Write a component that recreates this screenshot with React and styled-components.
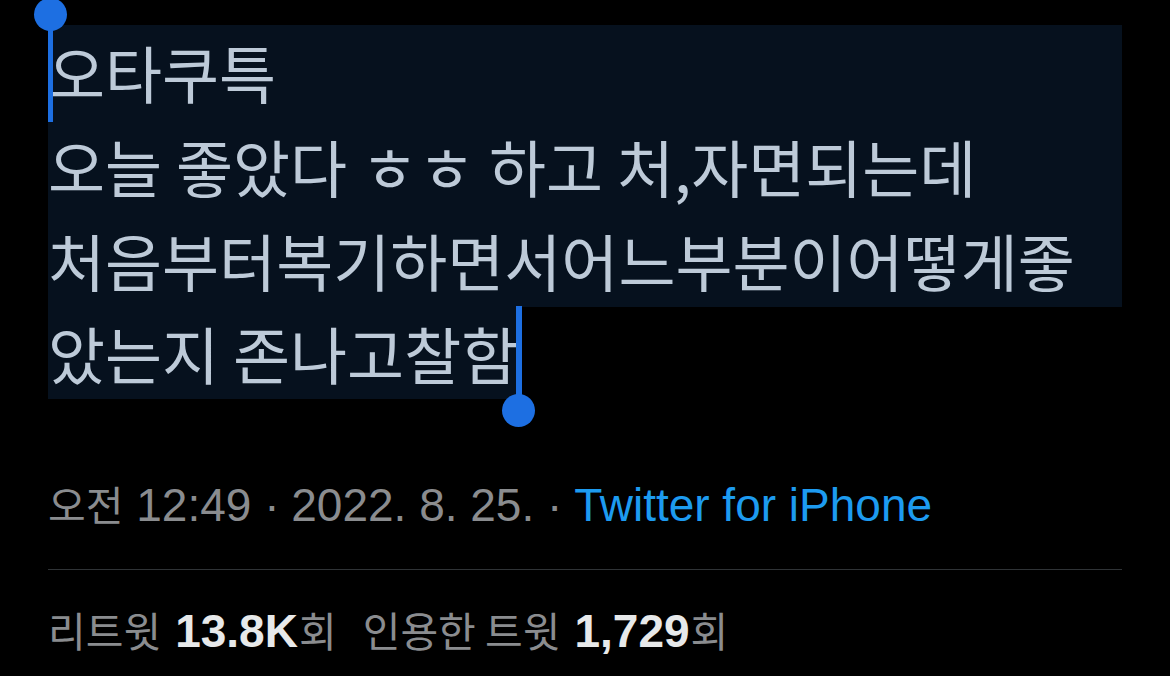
import React from "react";
import styled, { createGlobalStyle } from "styled-components";

const Global = createGlobalStyle`
  html, body {
    margin: 0;
    padding: 0;
    background: #000;
  }
  body {
    font-family: "Noto Sans CJK KR", "Liberation Sans", sans-serif;
    -webkit-font-smoothing: antialiased;
  }
`;

const Page = styled.div`
  width: 1170px;
  height: 676px;
  overflow: hidden;
  background: #000;
  box-sizing: border-box;
  padding: 25px 48px 0 48px;
`;

const Selection = styled.div`
  position: relative;
  font-family: "Noto Sans CJK KR", sans-serif;
  font-size: 62px;
  color: #bdcad8;
`;

const FullLines = styled.div`
  position: relative;
  background: #06111e;
  white-space: pre;
  line-height: 94px;
`;

const LastLine = styled.span`
  position: relative;
  display: inline-block;
  vertical-align: top;
  background: #06111e;
  white-space: pre;
  line-height: 92px;
  padding-right: 0;
`;

const handleBlue = "#1d6fe2";

const StartHandle = styled.span`
  position: absolute;
  left: 0;
  top: -25px;
  width: 5px;
  height: 122px;
  background: ${handleBlue};
  &::before {
    content: "";
    position: absolute;
    left: -14px;
    top: -2px;
    width: 33px;
    height: 33px;
    border-radius: 50%;
    background: ${handleBlue};
  }
`;

const EndHandle = styled.span`
  position: absolute;
  left: calc(100% - 2px);
  top: -1px;
  width: 6px;
  height: 100px;
  background: ${handleBlue};
  &::after {
    content: "";
    position: absolute;
    left: -14px;
    bottom: -21px;
    width: 33px;
    height: 33px;
    border-radius: 50%;
    background: ${handleBlue};
  }
`;

const Meta = styled.div`
  margin-top: 76px;
  font-family: "Liberation Sans", "Noto Sans CJK KR", sans-serif;
  font-size: 46px;
  line-height: 60px;
  height: 60px;
  color: #8a8c8f;
  white-space: pre;
`;

const Ko = styled.span`
  font-family: "Noto Sans CJK KR", sans-serif;
  font-size: 41px;
  line-height: 1;
`;

const Dot = styled.span`
  margin: 0 -1px 0 0;
`;

const Source = styled.span`
  color: #1d9bf0;
`;

const Divider = styled.div`
  margin-top: 34px;
  height: 1px;
  background: #2f3336;
`;

const Stats = styled.div`
  margin-top: 31px;
  font-family: "Liberation Sans", "Noto Sans CJK KR", sans-serif;
  font-size: 46px;
  line-height: 60px;
  color: #8a8c8f;
  white-space: pre;
  display: flex;
  gap: 26px;
`;

const Stat = styled.span``;

const Num = styled.b`
  color: #e7e9ea;
  font-weight: 700;
  margin: 0 1px 0 14px;
`;

export default function App() {
  return (
    <>
      <Global />
      <Page>
        <Selection>
          <FullLines>
            <StartHandle />
            {"오타쿠특\n오늘 좋았다 ㅎㅎ 하고 처,자면되는데\n처음부터복기하면서어느부분이어떻게좋"}
          </FullLines>
          <LastLine>
            {"았는지 존나고찰함"}
            <EndHandle />
          </LastLine>
        </Selection>
        <Meta>
          <Ko>오전</Ko> 12:49 <Dot>·</Dot> 2022. 8. 25. <Dot>·</Dot> <Source>Twitter for iPhone</Source>
        </Meta>
        <Divider />
        <Stats>
          <Stat>
            <Ko>리트윗</Ko>
            <Num>13.8K</Num>
            <Ko>회</Ko>
          </Stat>
          <Stat>
            <Ko>인용한 트윗</Ko>
            <Num>1,729</Num>
            <Ko>회</Ko>
          </Stat>
        </Stats>
      </Page>
    </>
  );
}
